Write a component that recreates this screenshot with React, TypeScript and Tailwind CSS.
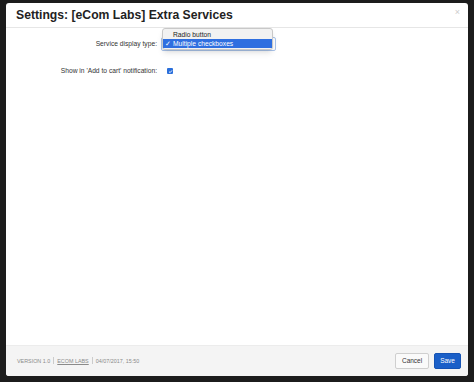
import React from 'react';

export default function App() {
  return (
    <div
      className="w-[474px] h-[382px] bg-[#1c1c1c] pt-[3px] pl-[6px] overflow-hidden"
      style={{ fontFamily: '"Liberation Sans", Arial, sans-serif' }}
    >
      <div className="relative w-[462px] h-[373px] bg-white rounded-[3px] flex flex-col overflow-hidden">
        {/* Header */}
        <div className="h-[25px] border-b border-[#e6e6e6] flex items-center pl-[10px] pr-[8px] shrink-0">
          <h1 className="text-[12.2px] font-bold text-[#222] leading-none">Settings: [eCom Labs] Extra Services</h1>
          <span className="ml-auto text-[9px] text-[#ccc] self-start mt-[3px]">×</span>
        </div>

        {/* Body */}
        <div className="flex-1 pt-[9px]">
          <div className="flex items-center h-[14px]">
            <label className="w-[155px] text-right text-[6.7px] text-[#333] pr-[4px]">Service display type:</label>
            <div className="relative w-[115px] h-[14px] border border-[#aac4ea] rounded-[2px] bg-white flex items-center justify-end pr-[2px]">
              <span className="text-[5px] text-[#555] leading-none flex flex-col">
                <span>▴</span>
                <span>▾</span>
              </span>
              {/* open dropdown */}
              <div className="absolute left-[0px] top-[-10px] w-[111px] bg-[#f2f2f2] border border-[#c8c8c8] rounded-[3px] shadow-md py-[1px] text-[6.7px] leading-[9px]">
                <div className="pl-[10px] text-[#222]">Radio button</div>
                <div className="bg-[#2f6fe0] text-white pl-[2px] flex">
                  <span className="w-[8px]">✓</span>
                  <span>Multiple checkboxes</span>
                </div>
              </div>
            </div>
          </div>

          <div className="flex items-center h-[14px] mt-[13px]">
            <label className="w-[161px] text-right text-[6.7px] text-[#333] pr-[10px]">Show in 'Add to cart' notification:</label>
            <span className="w-[6px] h-[6px] rounded-[1px] bg-[#2a6fdb] flex items-center justify-center">
              <svg viewBox="0 0 10 10" className="w-[5px] h-[5px]">
                <path d="M2 5.2 L4.2 7.3 L8 2.8" stroke="white" strokeWidth="1.8" fill="none" />
              </svg>
            </span>
          </div>
        </div>

        {/* Footer */}
        <div className="h-[31px] bg-[#f4f4f4] border-t border-[#ececec] flex items-center pl-[11px] pr-[7px] shrink-0">
          <div className="flex items-center text-[5.4px] uppercase text-[#8a8a8a] gap-[3px]">
            <span>Version 1.0</span>
            <span className="w-px h-[7px] bg-[#ccc]"></span>
            <span className="underline">eCom Labs</span>
            <span className="w-px h-[7px] bg-[#ccc]"></span>
            <span>04/07/2017, 15:50</span>
          </div>
          <div className="ml-auto flex items-center gap-[5px]">
            <button className="h-[16px] px-[6px] bg-[#fafafa] border border-[#cfcfcf] rounded-[2px] text-[6.5px] text-[#333]">Cancel</button>
            <button className="h-[16px] px-[5px] bg-[#1a5fc8] border border-[#1553b4] rounded-[2px] text-[6.5px] text-white">Save</button>
          </div>
        </div>
      </div>
    </div>
  );
}
